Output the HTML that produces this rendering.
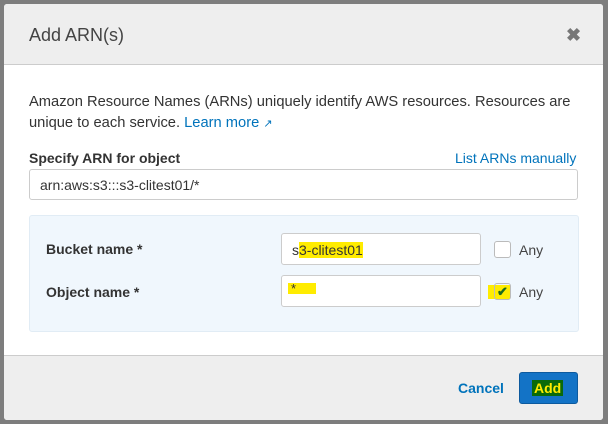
<!DOCTYPE html><html><head><style>
body{margin:0;width:608px;height:424px;background:#7d7d7d;font-family:"Liberation Sans",sans-serif;position:relative;overflow:hidden;color:#333}
.m{position:absolute;left:4px;top:4px;width:599px;height:416px;background:#fff;border-radius:3px;overflow:hidden}
.h{position:absolute;left:0;top:0;right:0;height:60px;background:#eee;border-bottom:1px solid #ccc}
.a{position:absolute;font-size:14px;white-space:nowrap}
.in{position:absolute;border:1px solid #ccc;border-radius:3px;background:#fff;box-sizing:border-box}
.hl{background:#ffec00}
</style></head><body>
<div class="m">
<div class="h"><div class="a" style="left:25px;top:21px;font-size:18px;color:#444">Add ARN(s)</div>
<div class="a" style="left:562px;top:21px;font-size:18px;color:#777;font-weight:bold">✖</div></div>
<div class="a" style="left:25px;top:88px;line-height:21px;font-size:14.7px">Amazon Resource Names (ARNs) uniquely identify AWS resources. Resources are<br>unique to each service. <span style="color:#0073bb">Learn more <span style="font-size:11px">↗</span></span></div>
<div class="a" style="left:25px;top:146px;font-weight:bold">Specify ARN for object</div>
<div class="a" style="left:451px;top:146px;color:#0073bb">List ARNs manually</div>
<div class="in" style="left:25px;top:165px;width:549px;height:31px"><div class="a" style="left:10px;top:7px">arn:aws:s3:::s3-clitest01/*</div></div>
<div style="position:absolute;left:25px;top:211px;width:548px;height:115px;background:#f0f7fd;border:1px solid #e1ecf5;border-radius:3px"></div>
<div class="a" style="left:42px;top:237px;font-weight:bold">Bucket name *</div>
<div class="a" style="left:42px;top:280px;font-weight:bold">Object name *</div>
<div class="in" style="left:277px;top:229px;width:200px;height:32px"><div class="a" style="left:10px;top:8px">s<span class="hl">3-clitest01</span></div></div>
<div class="in" style="left:277px;top:271px;width:200px;height:32px"><div class="a hl" style="left:6px;top:7px;width:25px;height:11px;font-size:13px;line-height:12px;padding-left:3px">*</div></div>
<div style="position:absolute;left:490px;top:237px;width:15px;height:15px;border:1px solid #bbb;border-radius:3px;background:#fff"></div>
<div style="position:absolute;left:484px;top:281px;width:22px;height:14px;background:#ffec00"></div>
<div style="position:absolute;left:490px;top:279px;width:15px;height:15px;border:1px solid #bbb;border-radius:3px;color:#1d6b1d;font-size:13px;line-height:16px;text-align:center;font-weight:bold">✔</div>
<div class="a" style="left:515px;top:238px;color:#444">Any</div>
<div class="a" style="left:515px;top:280px;color:#444">Any</div>
<div style="position:absolute;left:0;right:0;top:351px;bottom:0;background:#eee;border-top:1px solid #ccc"></div>
<div class="a" style="left:454px;top:376px;font-weight:bold;color:#0073bb">Cancel</div>
<div style="position:absolute;left:515px;top:368px;width:57px;height:30px;background:#1373c6;border:1px solid #0d5a9e;border-radius:3px"></div>
<div class="a" style="left:528px;top:376px;font-weight:bold;color:#ffec00;background:#0a6a0a;padding:0 2px">Add</div>
</div>
</body></html>
